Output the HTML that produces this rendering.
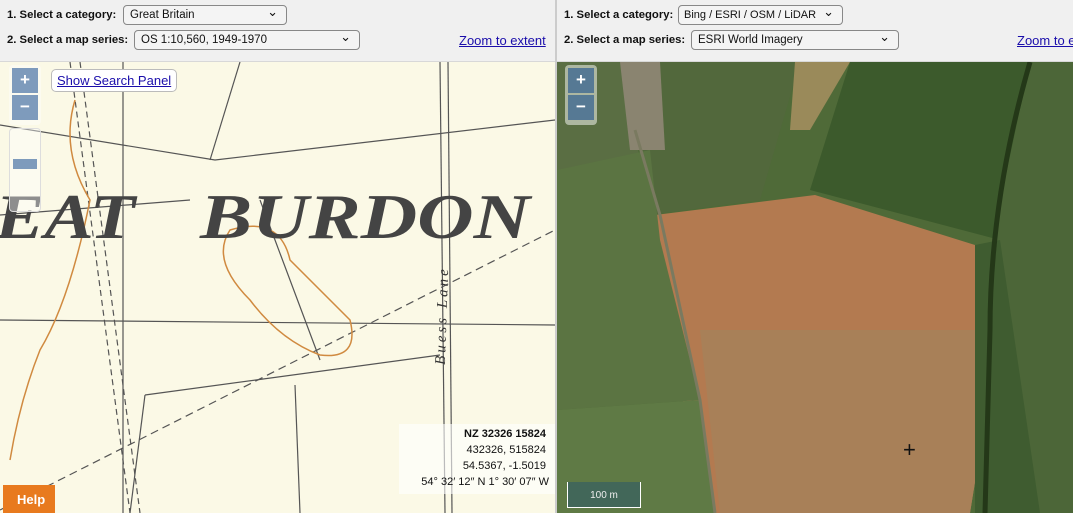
<!DOCTYPE html>
<html><head><meta charset="utf-8"><style>
*{margin:0;padding:0;box-sizing:border-box}
body{width:1073px;height:513px;overflow:hidden;position:relative;font-family:"Liberation Sans",sans-serif;background:#fff}
.hdr{position:absolute;top:0;height:62px;background:#f0f0f0;border-bottom:1px solid #d8d8d8;font-size:11.5px}
.lbl{position:absolute;font-weight:bold;color:#111;font-size:11.3px;white-space:nowrap}
.sel{position:absolute;height:20px;border:1px solid #888;border-radius:4px;background:#f4f4f4;font-size:11.5px;padding:0 6px;line-height:18px;color:#111;white-space:nowrap}
.sel:after{content:"⌄";position:absolute;right:8px;top:-3px;font-size:13px}
.zl{position:absolute;color:#1a0dab;text-decoration:underline;font-size:13px}
.map{position:absolute;top:62px;height:451px;overflow:hidden}
.zb{position:absolute;width:32px;height:60px;border-radius:4px;background:rgba(255,255,255,.4)}
.zb div{position:absolute;left:3px;width:26px;height:25px;background:rgba(0,60,136,.5);color:#fff;font-weight:bold;font-size:17px;text-align:center;line-height:24px}
</style></head><body>
<div class="hdr" style="left:0;width:555px">
<div class="lbl" style="left:7px;top:9px">1. Select a category:</div>
<div class="sel" style="left:123px;top:5px;width:164px">Great Britain</div>
<div class="lbl" style="left:7px;top:34px">2. Select a map series:</div>
<div class="sel" style="left:134px;top:30px;width:226px">OS 1:10,560, 1949-1970</div>
<a class="zl" style="left:459px;top:33px">Zoom to extent</a>
</div>
<div style="position:absolute;left:555px;top:0;width:2px;height:513px;background:#ccc"></div>
<div class="hdr" style="left:557px;width:516px">
<div class="lbl" style="left:7px;top:9px">1. Select a category:</div>
<div class="sel" style="left:121px;top:5px;width:165px;font-size:11px;padding-left:5px">Bing / ESRI / OSM / LiDAR</div>
<div class="lbl" style="left:7px;top:34px">2. Select a map series:</div>
<div class="sel" style="left:134px;top:30px;width:208px">ESRI World Imagery</div>
<a class="zl" style="left:460px;top:33px;white-space:nowrap">Zoom to extent</a>
</div>
<div class="map" style="left:0;width:555px;background:#fbf9e6">
<svg width="555" height="451" viewBox="0 62 555 451" style="position:absolute;left:0;top:0">
<g fill="none" stroke="#555" stroke-width="1.2">
<path d="M0 125 L215 160 L555 120"/><path d="M0 215 L190 200"/><path d="M0 320 L555 325"/><path d="M145 395 L440 355"/><path d="M145 395 L130 513"/><path d="M295 385 L300 513"/>
<path d="M123 62 L123 513"/><path d="M240 62 L210 160"/><path d="M440 62 L445 513"/><path d="M448 62 L452 513"/><path d="M260 200 L320 360"/>
<path d="M0 510 L555 230" stroke-dasharray="8 5"/><path d="M70 62 L130 513" stroke-dasharray="6 4"/><path d="M80 62 L140 513" stroke-dasharray="6 4"/>
</g>
<g fill="none" stroke="#d08a40" stroke-width="1.5">
<path d="M75 100 Q60 150 90 200 Q70 300 40 350 Q20 400 10 460"/>
<path d="M230 230 Q280 215 290 260 Q330 300 350 320 Q360 360 320 355 Q280 340 250 300 Q210 260 230 230Z"/>
</g>
<text x="200" y="238" font-family="Liberation Serif" font-style="italic" font-weight="bold" font-size="64" fill="#444" textLength="330" lengthAdjust="spacingAndGlyphs">BURDON</text>
<text x="-5" y="238" font-family="Liberation Serif" font-style="italic" font-weight="bold" font-size="64" fill="#444" textLength="140" lengthAdjust="spacingAndGlyphs">EAT</text>
<text x="440" y="360" font-family="Liberation Serif" font-style="italic" font-size="15" fill="#333" transform="rotate(-88 445 360)" letter-spacing="3">Buess Lane</text>
</svg>
<div class="zb" style="left:9px;top:3px"><div style="top:3px">+</div><div style="top:30px">−</div></div>
<div style="position:absolute;left:9px;top:66px;width:32px;height:84px;border-radius:4px;background:rgba(255,255,255,.4);border:1px solid #ddd"><div style="position:absolute;left:3px;top:30px;width:24px;height:10px;background:rgba(0,60,136,.5)"></div></div>
<div style="position:absolute;left:51px;top:7px;padding:3px 5px;background:#fff;border:1px solid #bbb;border-radius:5px;font-size:13px;color:#1a0dab;text-decoration:underline">Show Search Panel</div>
<div style="position:absolute;right:0;top:362px;width:156px;height:70px;background:rgba(255,255,255,.6);font-size:11px;text-align:right;padding:2px 9px;line-height:16px;color:#111"><b>NZ 32326 15824</b><br>432326, 515824<br>54.5367, -1.5019<br><span style="margin-right:-3px">54° 32′ 12″ N 1° 30′ 07″ W</span></div>
<div style="position:absolute;left:3px;top:423px;width:52px;height:30px;background:#e87a1e;color:#fff;font-weight:bold;font-size:13px;padding:7px 14px">Help</div>
</div>
<div class="map" style="left:557px;width:516px;background:#4f6a38">
<svg width="516" height="451" viewBox="557 62 516 451" style="position:absolute;left:0;top:0">
<polygon points="557,62 800,62 760,200 650,215 640,140 600,62" fill="#52683c"/>
<polygon points="557,62 620,62 640,160 557,170" fill="#5a6e43"/>
<polygon points="795,62 850,62 810,130 790,130" fill="#9a8a5a"/>
<polygon points="850,62 1030,62 1000,240 810,190" fill="#3c5a2c"/>
<polygon points="1030,62 1073,62 1073,513 1040,513 990,250" fill="#4c6638"/>
<polygon points="655,215 815,195 975,245 985,420 970,513 700,513" fill="#b37a50"/>
<polygon points="700,330 980,330 985,420 970,513 720,513" fill="#a88058"/>
<polygon points="557,170 650,150 660,240 700,400 557,410" fill="#5b7442"/>
<polygon points="557,410 700,400 715,513 557,513" fill="#5f7a45"/>
<polygon points="975,245 1000,240 1040,513 975,513" fill="#3f5c30"/>
<polygon points="620,62 660,62 665,150 630,150" fill="#8a8470"/>
<path d="M635 130 L660 215 L700 400 L715 513" stroke="#7a7a60" stroke-width="3" fill="none"/>
<path d="M1030 62 Q990 200 990 330 L985 513" stroke="#243818" stroke-width="5" fill="none"/>
</svg>
<div class="zb" style="left:8px;top:3px;background:rgba(255,255,255,.5)"><div style="top:3px">+</div><div style="top:30px">−</div></div>
<div style="position:absolute;left:10px;top:420px;width:74px;height:26px;border:1px solid #fff;border-top:none;background:rgba(0,60,136,.3);color:#eee;font-size:10px;text-align:center;line-height:28px">100 m</div>
<div style="position:absolute;left:346px;top:380px;width:20px;height:20px;color:#111;font-size:22px;line-height:16px">+</div>
</div>
</body></html>
